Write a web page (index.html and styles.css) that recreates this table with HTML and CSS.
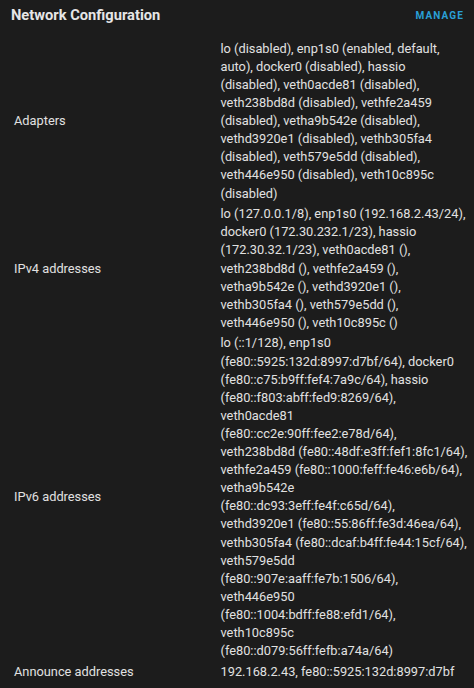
FILE: index.html
```html
<!DOCTYPE html>
<html>
<head>
<meta charset="utf-8">
<link rel="stylesheet" href="styles.css">
</head>
<body>
<div class="card">
  <div class="header">
    <div class="title">Network Configuration</div>
    <div class="manage">MANAGE</div>
  </div>
  <div class="table">
    <div class="row">
      <div class="label">Adapters</div>
      <div class="value">lo (disabled), enp1s0 (enabled, default,<br>auto), docker0 (disabled), hassio<br>(disabled), veth0acde81 (disabled),<br>veth238bd8d (disabled), vethfe2a459<br>(disabled), vetha9b542e (disabled),<br>vethd3920e1 (disabled), vethb305fa4<br>(disabled), veth579e5dd (disabled),<br>veth446e950 (disabled), veth10c895c<br>(disabled)</div>
    </div>
    <div class="row">
      <div class="label">IPv4 addresses</div>
      <div class="value">lo (127.0.0.1/8), enp1s0 (192.168.2.43/24),<br>docker0 (172.30.232.1/23), hassio<br>(172.30.32.1/23), veth0acde81 (),<br>veth238bd8d (), vethfe2a459 (),<br>vetha9b542e (), vethd3920e1 (),<br>vethb305fa4 (), veth579e5dd (),<br>veth446e950 (), veth10c895c ()</div>
    </div>
    <div class="row">
      <div class="label">IPv6 addresses</div>
      <div class="value">lo (::1/128), enp1s0<br>(fe80::5925:132d:8997:d7bf/64), docker0<br>(fe80::c75:b9ff:fef4:7a9c/64), hassio<br>(fe80::f803:abff:fed9:8269/64),<br>veth0acde81<br>(fe80::cc2e:90ff:fee2:e78d/64),<br>veth238bd8d (fe80::48df:e3ff:fef1:8fc1/64),<br>vethfe2a459 (fe80::1000:feff:fe46:e6b/64),<br>vetha9b542e<br>(fe80::dc93:3eff:fe4f:c65d/64),<br>vethd3920e1 (fe80::55:86ff:fe3d:46ea/64),<br>vethb305fa4 (fe80::dcaf:b4ff:fe44:15cf/64),<br>veth579e5dd<br>(fe80::907e:aaff:fe7b:1506/64),<br>veth446e950<br>(fe80::1004:bdff:fe88:efd1/64),<br>veth10c895c<br>(fe80::d079:56ff:fefb:a74a/64)</div>
    </div>
    <div class="row">
      <div class="label">Announce addresses</div>
      <div class="value">192.168.2.43, fe80::5925:132d:8997:d7bf</div>
    </div>
  </div>
</div>
</body>
</html>
```

FILE: styles.css
```css
html, body {
  margin: 0;
  padding: 0;
  background: #1c1c1c;
}
body {
  font-family: Roboto, "Liberation Sans", sans-serif;
  color: #e1e1e1;
}
.card {
  padding: 0 10px 20px 0;
}
.header {
  height: 30px;
  display: flex;
  align-items: center;
  justify-content: space-between;
  padding-left: 11px;
}
.title {
  font-size: 14.7px;
  font-weight: 700;
  color: #e6e6e6;
}
.manage {
  font-size: 10px;
  font-weight: 700;
  letter-spacing: 1.1px;
  color: #2a9fd6;
}
.table {
  margin-top: 8.5px;
  padding-left: 14px;
}
.row {
  display: grid;
  grid-template-columns: 206.5px 1fr;
  align-items: center;
  padding: 1.3px 0;
  font-size: 12.8px;
  line-height: 18.1px;
}
.label {
  white-space: nowrap;
}
.value {
  white-space: nowrap;
}
```
